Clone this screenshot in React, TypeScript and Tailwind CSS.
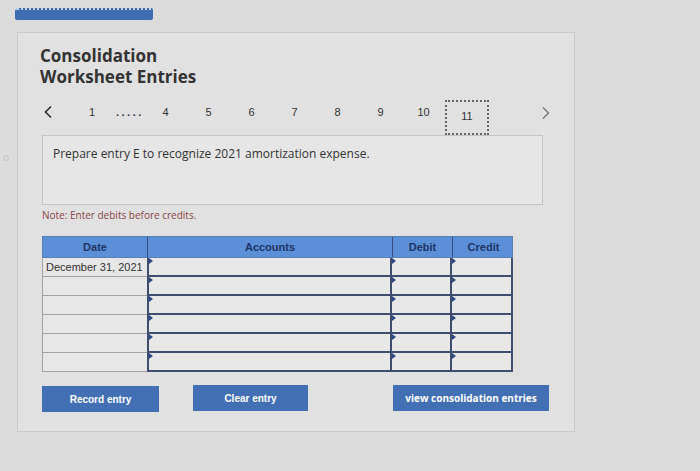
import React from "react";

const Tri = () => (
  <span className="absolute left-0 top-0 w-0 h-0 border-t-[3px] border-t-transparent border-b-[3px] border-b-transparent border-l-[4px] border-l-[#2d4a86]" />
);

export default function App() {
  const rows = [0, 1, 2, 3, 4, 5];
  return (
    <div
      className="w-[700px] h-[471px] bg-[#dcdcdc] relative overflow-hidden pt-[8px] pl-[15px]"
      style={{ fontFamily: "'Liberation Sans', Arial, sans-serif" }}
    >
      <div className="w-[138px] h-[12px] bg-[#3e6db4] rounded-[2px] border-t-[2px] border-dotted border-t-[#c9d4ea]" />
      <div className="absolute left-[3px] top-[155px] w-[6px] h-[6px] rounded-full border border-[#c4c4c4]" />
      <div className="mt-[12px] ml-[2px] w-[558px] h-[400px] bg-[#e1e1e1] border border-[#c9c9c9] pl-[24px] pt-[12px]">
        <div
          className="-ml-[2px] text-[17px] leading-[21px] font-bold text-[#333]"
          style={{ fontFamily: "'Open Sans', sans-serif" }}
        >
          <div>Consolidation</div>
          <div>Worksheet Entries</div>
        </div>

        <div className="mt-[13px] h-[35px] flex items-start text-[11px] leading-[13px] text-[#333]">
          <div className="w-[12px] flex justify-center pt-[5px]">
            <svg width="10" height="14" viewBox="0 0 10 14">
              <path d="M8 1.5 L2.5 7 L8 12.5" fill="none" stroke="#333" strokeWidth="1.7" />
            </svg>
          </div>
          <div className="w-[28px]" />
          <div className="w-[20px] text-center pt-[6px]">1</div>
          <div className="w-[42px] pl-[14px] pt-[6px] tracking-[2.5px] font-bold">.....</div>
          {["4", "5", "6", "7", "8", "9", "10"].map((n) => (
            <div key={n} className="w-[43px] text-center pt-[6px]">{n}</div>
          ))}
          <div className="w-[44px] h-[35px] flex justify-center pt-[8px] border-[2px] border-dotted border-[#666]">
            11
          </div>
          <div className="ml-[52px] pt-[6px]">
            <svg width="10" height="14" viewBox="0 0 10 14">
              <path d="M2 1.5 L7.5 7 L2 12.5" fill="none" stroke="#777" strokeWidth="1.4" />
            </svg>
          </div>
        </div>

        <div
          className="w-[501px] h-[70px] bg-[#e6e6e6] border border-[#c4c4c4] pl-[10px] pt-[9px] text-[12px] text-[#333]"
          style={{ fontFamily: "'Open Sans', sans-serif" }}
        >
          Prepare entry E to recognize 2021 amortization expense.
        </div>

        <div
          className="mt-[3px] text-[10px] leading-[14px] text-[#8a4545]"
          style={{ fontFamily: "'Open Sans', sans-serif" }}
        >
          Note: Enter debits before credits.
        </div>

        <div className="mt-[14px] w-[471px]">
          <div className="grid grid-cols-[105px_245px_60px_61px] h-[22px] bg-[#5b8fd7] text-[11px] font-bold text-[#1f3565] border border-[#5b7fb8]">
            <div className="flex items-center justify-center border-r border-[#3b4d78]">Date</div>
            <div className="flex items-center justify-center border-r border-[#3b4d78]">Accounts</div>
            <div className="flex items-center justify-center border-r border-[#3b4d78]">Debit</div>
            <div className="flex items-center justify-center">Credit</div>
          </div>
          {rows.map((r) => (
            <div key={r} className="grid grid-cols-[105px_245px_60px_61px] h-[19px]">
              <div className="bg-[#e7e7e7] border-l border-b border-[#a3a3a3] text-[11px] text-[#333] pl-[3px] flex items-center">
                {r === 0 ? "December 31, 2021" : ""}
              </div>
              <div className="relative bg-[#e8e8e8] border-[2px] border-t-0 border-[#3f4d6e]">
                <Tri />
              </div>
              <div className="relative bg-[#e8e8e8] border-[2px] border-t-0 border-l-0 border-[#3f4d6e]">
                <Tri />
              </div>
              <div className="relative bg-[#e8e8e8] border-[2px] border-t-0 border-l-0 border-[#3f4d6e]">
                <Tri />
              </div>
            </div>
          ))}
        </div>

        <div className="mt-[14px] flex items-start text-[10px] font-bold text-white">
          <div className="w-[117px] h-[26px] bg-[#4370b5] flex items-center justify-center">Record entry</div>
          <div className="ml-[34px] -mt-[1px] w-[115px] h-[26px] bg-[#4370b5] flex items-center justify-center">Clear entry</div>
          <div
            className="ml-[85px] -mt-[1px] w-[156px] h-[26px] bg-[#4370b5] flex items-center justify-center"
            style={{ fontFamily: "'Open Sans', sans-serif" }}
          >
            view consolidation entries
          </div>
        </div>
      </div>
    </div>
  );
}
